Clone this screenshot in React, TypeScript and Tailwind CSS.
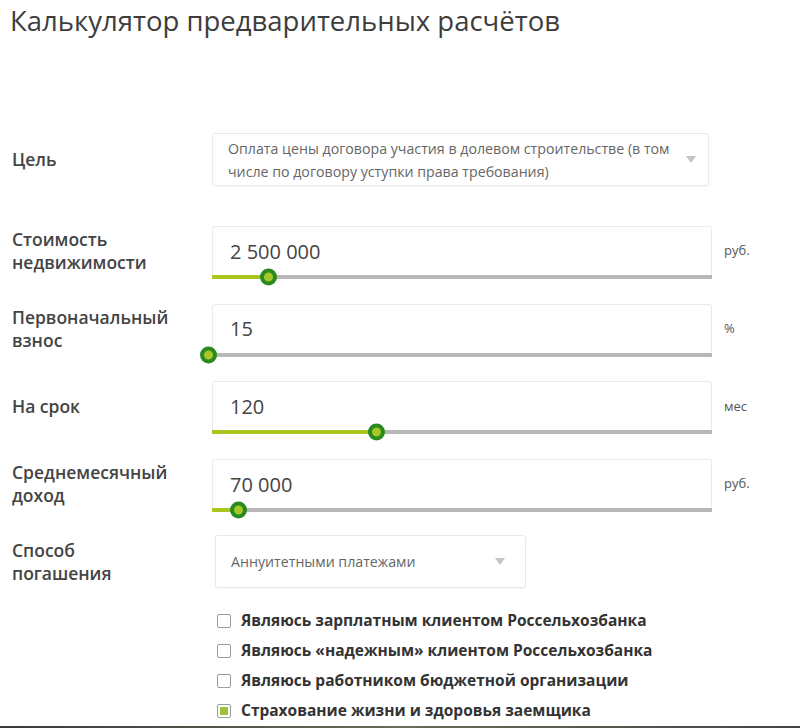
import React from 'react';

const font = { fontFamily: '"Open Sans", "Liberation Sans", sans-serif' };

type SliderRow = {
  label: string[];
  value: string;
  unit: string;
  pct: number;
};

const rows: SliderRow[] = [
  { label: ['Стоимость', 'недвижимости'], value: '2 500 000', unit: 'руб.', pct: 11.2 },
  { label: ['Первоначальный', 'взнос'], value: '15', unit: '%', pct: 0 },
  { label: ['На срок'], value: '120', unit: 'мес', pct: 32.7 },
  { label: ['Среднемесячный', 'доход'], value: '70 000', unit: 'руб.', pct: 5.2 },
];

const checks = [
  { text: 'Являюсь зарплатным клиентом Россельхозбанка', on: false },
  { text: 'Являюсь «надежным» клиентом Россельхозбанка', on: false },
  { text: 'Являюсь работником бюджетной организации', on: false },
  { text: 'Страхование жизни и здоровья заемщика', on: true },
];

function Arrow() {
  return (
    <svg width="10" height="7" viewBox="0 0 10 7" className="shrink-0">
      <path d="M0 0 L10 0 L5 7 Z" fill="#c4c4c4" />
    </svg>
  );
}

function Label({ lines }: { lines: string[] }) {
  return (
    <div className="w-[200px] shrink-0 text-[17.5px] font-semibold leading-[23px] text-[#444]">
      {lines.map((l) => (
        <div key={l}>{l}</div>
      ))}
    </div>
  );
}

export default function App() {
  return (
    <div className="flex h-[728px] w-[800px] flex-col overflow-hidden bg-white" style={font}>
      <h1 className="pl-[10px] pt-[5px] text-[27.5px] font-normal leading-[32px] text-[#3d3d3d]">
        Калькулятор предварительных расчётов
      </h1>

      <div className="mt-[96px] pl-3">
        {/* Цель */}
        <div className="flex items-center">
          <Label lines={['Цель']} />
          <div className="flex h-[53px] w-[497px] items-center justify-between rounded-[3px] border border-[#e8e8e8] pl-[15px] pr-[20px] shadow-[0_1px_2px_rgba(0,0,0,0.04)]">
            <div className="w-[458px] shrink-0 text-[14.2px] leading-[23px] text-[#666]">
              Оплата цены договора участия в долевом строительстве (в&nbsp;том числе по
              договору уступки права требования)
            </div>
            <Arrow />
          </div>
        </div>

        {/* sliders */}
        <div className="mt-[40px] flex flex-col gap-[27.7px]">
          {rows.map((r) => (
            <div key={r.value} className="flex items-center">
              <Label lines={r.label} />
              <div className="relative h-[50px] w-[500px] shrink-0 rounded-t-[3px] border border-b-0 border-[#ebebeb] bg-white">
                <div className="flex h-full items-center pl-[17px] text-[20px] text-[#444]">
                  {r.value}
                </div>
                <div className="absolute -left-px -right-px bottom-[-3px] h-[4px] bg-[#b7b7b7]">
                  <div className="h-full bg-[#a9c61f]" style={{ width: `${r.pct}%` }} />
                  <div
                    className="absolute top-1/2 h-[17px] w-[17px] -translate-y-1/2 rounded-full border-[4px] border-[#2a8a1f] bg-[#a6c72a]"
                    style={{ left: `calc(${r.pct}% - ${r.pct === 0 ? 12 : 8}px)` }}
                  />
                </div>
              </div>
              <div className="pl-[12px] text-[13px] text-[#555]">{r.unit}</div>
            </div>
          ))}
        </div>

        {/* Способ погашения */}
        <div className="mt-[26px] flex items-center">
          <Label lines={['Способ', 'погашения']} />
          <div className="ml-[3px] flex h-[53px] w-[311px] items-center justify-between rounded-[3px] border border-[#e8e8e8] pl-[15px] pr-[20px] shadow-[0_1px_2px_rgba(0,0,0,0.04)]">
            <span className="text-[14.2px] text-[#666]">Аннуитетными платежами</span>
            <Arrow />
          </div>
        </div>

        {/* checkboxes */}
        <div className="mt-[18px] flex flex-col pl-[205px]">
          {checks.map((c) => (
            <div key={c.text} className="flex h-[30px] items-center gap-[10px]">
              <div className="flex h-[14px] w-[14px] items-center justify-center rounded-[2px] border border-[#9a9a9a] bg-white">
                {c.on && <div className="h-[8px] w-[8px] bg-[#9cc43a]" />}
              </div>
              <span className="text-[15.5px] font-bold text-[#333]">{c.text}</span>
            </div>
          ))}
        </div>
      </div>

      <div className="mt-auto h-[4px] bg-gradient-to-r from-[#3a3a3a] via-[#6b6b5a] to-[#444]" />
    </div>
  );
}
